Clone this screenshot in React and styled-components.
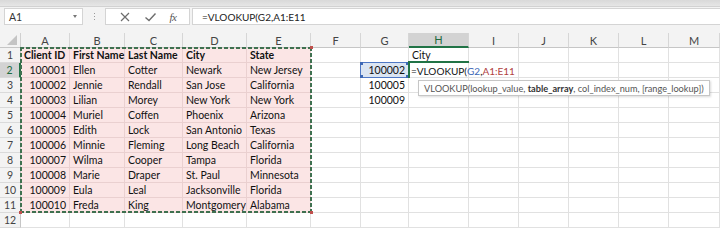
import React from "react";
import styled, { createGlobalStyle } from "styled-components";

const GlobalStyle = createGlobalStyle`
  html, body { margin: 0; padding: 0; background: #ffffff; }
  body { font-family: Lato, "Open Sans", "Liberation Sans", sans-serif; }
`;

const COLS = [21, 49, 55, 58, 64, 64, 50, 48, 60, 50, 50, 50, 50, 51];
const LETTERS = ["A", "B", "C", "D", "E", "F", "G", "H", "I", "J", "K", "L", "M"];

const DATA = [
  ["Client ID", "First Name", "Last Name", "City", "State"],
  ["100001", "Ellen", "Cotter", "Newark", "New Jersey"],
  ["100002", "Jennie", "Rendall", "San Jose", "California"],
  ["100003", "Lilian", "Morey", "New York", "New York"],
  ["100004", "Muriel", "Coffen", "Phoenix", "Arizona"],
  ["100005", "Edith", "Lock", "San Antonio", "Texas"],
  ["100006", "Minnie", "Fleming", "Long Beach", "California"],
  ["100007", "Wilma", "Cooper", "Tampa", "Florida"],
  ["100008", "Marie", "Draper", "St. Paul", "Minnesota"],
  ["100009", "Eula", "Leal", "Jacksonville", "Florida"],
  ["100010", "Freda", "King", "Montgomery", "Alabama"],
];

const Page = styled.div`
  width: 720px;
  height: 228px;
  overflow: hidden;
  background: #ffffff;
  display: flex;
  flex-direction: column;
`;

const TopStrip = styled.div`
  height: 6px;
  background: linear-gradient(#d9d9d9, #e6e6e6);
  border-bottom: 1px solid #d2d2d2;
`;

const FormulaBar = styled.div`
  height: 26px;
  background: #f3f3f3;
  display: flex;
  align-items: flex-start;
  padding: 1px 0 0 4px;
  box-sizing: border-box;
`;

const NameBox = styled.div`
  width: 79px;
  height: 17px;
  box-sizing: border-box;
  background: #ffffff;
  border: 1px solid #d4d4d4;
  display: flex;
  align-items: center;
  justify-content: space-between;
  padding: 0 5px 0 4px;
  font-size: 10.5px;
  color: #333;
`;

const Caret = styled.span`
  width: 0;
  height: 0;
  border-left: 2.5px solid transparent;
  border-right: 2.5px solid transparent;
  border-top: 3px solid #777;
`;

const Dots = styled.div`
  width: 22px;
  height: 17px;
  display: flex;
  flex-direction: column;
  align-items: center;
  justify-content: center;
  gap: 2px;
  & > span {
    width: 1px;
    height: 1px;
    background: #9a9a9a;
  }
`;

const IconBox = styled.div`
  width: 85px;
  height: 17px;
  box-sizing: border-box;
  background: #ffffff;
  border: 1px solid #d4d4d4;
  display: flex;
  align-items: center;
  justify-content: space-around;
  padding: 0 6px;
  color: #6b6b6b;
`;

const Fx = styled.span`
  font-family: "Liberation Serif", serif;
  font-style: italic;
  font-size: 11px;
  color: #555;
  letter-spacing: -0.5px;
`;

const FormulaInput = styled.div`
  flex: 1;
  height: 17px;
  margin-left: 2px;
  box-sizing: border-box;
  background: #ffffff;
  border: 1px solid #d4d4d4;
  border-right: none;
  display: flex;
  align-items: center;
  padding-left: 9px;
  font-size: 10px;
  color: #222;
`;

const Grid = styled.div`
  display: grid;
  grid-template-columns: ${COLS.map((w) => w + "px").join(" ")};
  grid-template-rows: repeat(13, 15px);
  position: relative;
`;

const Corner = styled.div`
  grid-column: 1;
  grid-row: 1;
  background: #f3f3f3;
  border-right: 1px solid #d0d0d0;
  border-bottom: 1px solid #c6c6c6;
  position: relative;
  &::after {
    content: "";
    position: absolute;
    right: 3px;
    bottom: 2px;
    width: 0;
    height: 0;
    border-left: 10px solid transparent;
    border-bottom: 10px solid #c4c4c4;
  }
`;

const ColHead = styled.div`
  grid-column: ${(p) => p.$c};
  grid-row: 1;
  background: ${(p) => (p.$active ? "#d3d3d3" : "#f3f3f3")};
  border-right: 1px solid #d6d6d6;
  border-bottom: ${(p) => (p.$active ? "2px solid #217346" : "1px solid #c6c6c6")};
  display: flex;
  align-items: center;
  justify-content: center;
  font-size: 11px;
  color: ${(p) => (p.$active ? "#1e6b41" : "#444")};
  box-sizing: border-box;
`;

const RowHead = styled.div`
  grid-column: 1;
  grid-row: ${(p) => p.$r};
  background: ${(p) => (p.$active ? "#d3d3d3" : "#f3f3f3")};
  border-right: ${(p) => (p.$active ? "2px solid #217346" : "1px solid #c6c6c6")};
  border-bottom: 1px solid #dadada;
  display: flex;
  align-items: center;
  justify-content: center;
  font-size: 10.5px;
  color: ${(p) => (p.$active ? "#1e6b41" : "#444")};
  box-sizing: border-box;
`;

const Cell = styled.div`
  grid-column: ${(p) => p.$c};
  grid-row: ${(p) => p.$r};
  background: ${(p) => (p.$pink ? "#fbe5e5" : p.$blue ? "#dbe5f2" : "#ffffff")};
  border-right: 1px solid ${(p) => (p.$pink ? "#ead0d0" : "#e1e1e1")};
  border-bottom: 1px solid ${(p) => (p.$pink ? "#ead0d0" : "#e1e1e1")};
  box-sizing: border-box;
  display: flex;
  align-items: center;
  justify-content: ${(p) => (p.$right ? "flex-end" : "flex-start")};
  padding: 0 3px 0 3px;
  font-size: 10.5px;
  font-weight: ${(p) => (p.$bold ? 700 : 400)};
  color: #111;
  white-space: nowrap;
  overflow: visible;
  min-width: 0;
`;

const Ants = styled.div`
  grid-column: 2 / 7;
  grid-row: 2 / 13;
  margin: -1px -1px 0 -1px;
  position: relative;
  pointer-events: none;
  z-index: 2;
  background:
    repeating-linear-gradient(90deg, #3f7150 0 4px, transparent 4px 6px) top / 100% 2px no-repeat,
    repeating-linear-gradient(90deg, #3f7150 0 4px, transparent 4px 6px) bottom / 100% 2px no-repeat,
    repeating-linear-gradient(180deg, #3f7150 0 4px, transparent 4px 6px) left / 2px 100% no-repeat,
    repeating-linear-gradient(180deg, #3f7150 0 4px, transparent 4px 6px) right / 2px 100% no-repeat;
`;

const Handle = styled.span`
  position: absolute;
  width: 3px;
  height: 3px;
  background: ${(p) => p.$color};
  ${(p) => (p.$top ? "top: -1px;" : "bottom: -1px;")}
  ${(p) => (p.$left ? "left: -1px;" : "right: -1px;")}
`;

const RefBox = styled.div`
  grid-column: 8;
  grid-row: 3;
  margin: -1px 0 0 -1px;
  border: 1px solid #4f78c4;
  position: relative;
  pointer-events: none;
  z-index: 3;
`;

const EditCell = styled.div`
  grid-column: 9;
  grid-row: 3;
  margin: -2px 0 0 -1px;
  border-top: 2px solid #217346;
  border-left: 2px solid #217346;
  z-index: 4;
  display: flex;
  align-items: center;
  padding-left: 1px;
  font-size: 10px;
  color: #111;
  white-space: nowrap;
  background: transparent;
`;

const Ref = styled.span`
  color: ${(p) => p.$color};
`;

const TextCursor = styled.span`
  display: inline-block;
  width: 1px;
  height: 13px;
  margin-left: 1px;
  background: #111;
`;

const Tooltip = styled.div`
  position: absolute;
  left: 418px;
  top: 47px;
  height: 16px;
  box-sizing: border-box;
  padding: 0 5px;
  background: #ffffff;
  border: 1px solid #c6c6c6;
  box-shadow: 1px 1px 2px rgba(0, 0, 0, 0.15);
  display: flex;
  align-items: center;
  font-size: 9.2px;
  color: #555;
  white-space: nowrap;
  z-index: 5;
  & b {
    color: #333;
    font-weight: 700;
  }
`;

function XIcon() {
  return (
    <svg width="12" height="12" viewBox="0 0 12 12">
      <path d="M2 2 L10 10 M10 2 L2 10" stroke="#6d6d6d" strokeWidth="1.2" fill="none" />
    </svg>
  );
}

function CheckIcon() {
  return (
    <svg width="13" height="12" viewBox="0 0 13 12">
      <path d="M1.5 6.5 L5 9.5 L11.5 2.5" stroke="#6d6d6d" strokeWidth="1.4" fill="none" />
    </svg>
  );
}

export default function App() {
  const rows = [];
  for (let r = 1; r <= 12; r++) {
    const gr = r + 1;
    rows.push(
      <RowHead key={"rh" + r} $r={gr} $active={r === 2}>
        {r}
      </RowHead>
    );
    for (let c = 0; c < 13; c++) {
      const gc = c + 2;
      let text = "";
      let right = false;
      let bold = false;
      let pink = false;
      let blue = false;
      if (r <= 11 && c <= 4) {
        pink = true;
        text = DATA[r - 1][c];
        bold = r === 1;
        right = r > 1 && c === 0;
      }
      if (c === 6) {
        if (r === 2) { text = "100002"; right = true; blue = true; }
        if (r === 3) { text = "100005"; right = true; }
        if (r === 4) { text = "100009"; right = true; }
      }
      if (c === 7 && r === 1) text = "City";
      rows.push(
        <Cell key={r + "-" + c} $c={gc} $r={gr} $pink={pink} $blue={blue} $right={right} $bold={bold}>
          {text}
        </Cell>
      );
    }
  }

  return (
    <Page>
      <GlobalStyle />
      <TopStrip />
      <FormulaBar>
        <NameBox>
          A1
          <Caret />
        </NameBox>
        <Dots>
          <span />
          <span />
          <span />
        </Dots>
        <IconBox>
          <XIcon />
          <CheckIcon />
          <Fx>fx</Fx>
        </IconBox>
        <FormulaInput>=VLOOKUP(G2,A1:E11</FormulaInput>
      </FormulaBar>
      <Grid>
        <Corner />
        {LETTERS.map((l, i) => (
          <ColHead key={l} $c={i + 2} $active={l === "H"}>
            {l}
          </ColHead>
        ))}
        {rows}
        <Ants>
          <Handle $color="#c0504d" $top={false} $left />
          <Handle $color="#c0504d" $top={false} $left={false} />
          <Handle $color="#c0504d" $top $left={false} />
        </Ants>
        <RefBox>
          <Handle $color="#3d68b5" $top $left />
          <Handle $color="#3d68b5" $top $left={false} />
          <Handle $color="#3d68b5" $top={false} $left />
          <Handle $color="#3d68b5" $top={false} $left={false} />
        </RefBox>
        <EditCell>
          =VLOOKUP(<Ref $color="#3b66b5">G2</Ref>,<Ref $color="#b0413e">A1:E11</Ref>
          <TextCursor />
        </EditCell>
        <Tooltip>
          VLOOKUP(lookup_value,&nbsp;<b>table_array</b>, col_index_num, [range_lookup])
        </Tooltip>
      </Grid>
    </Page>
  );
}
